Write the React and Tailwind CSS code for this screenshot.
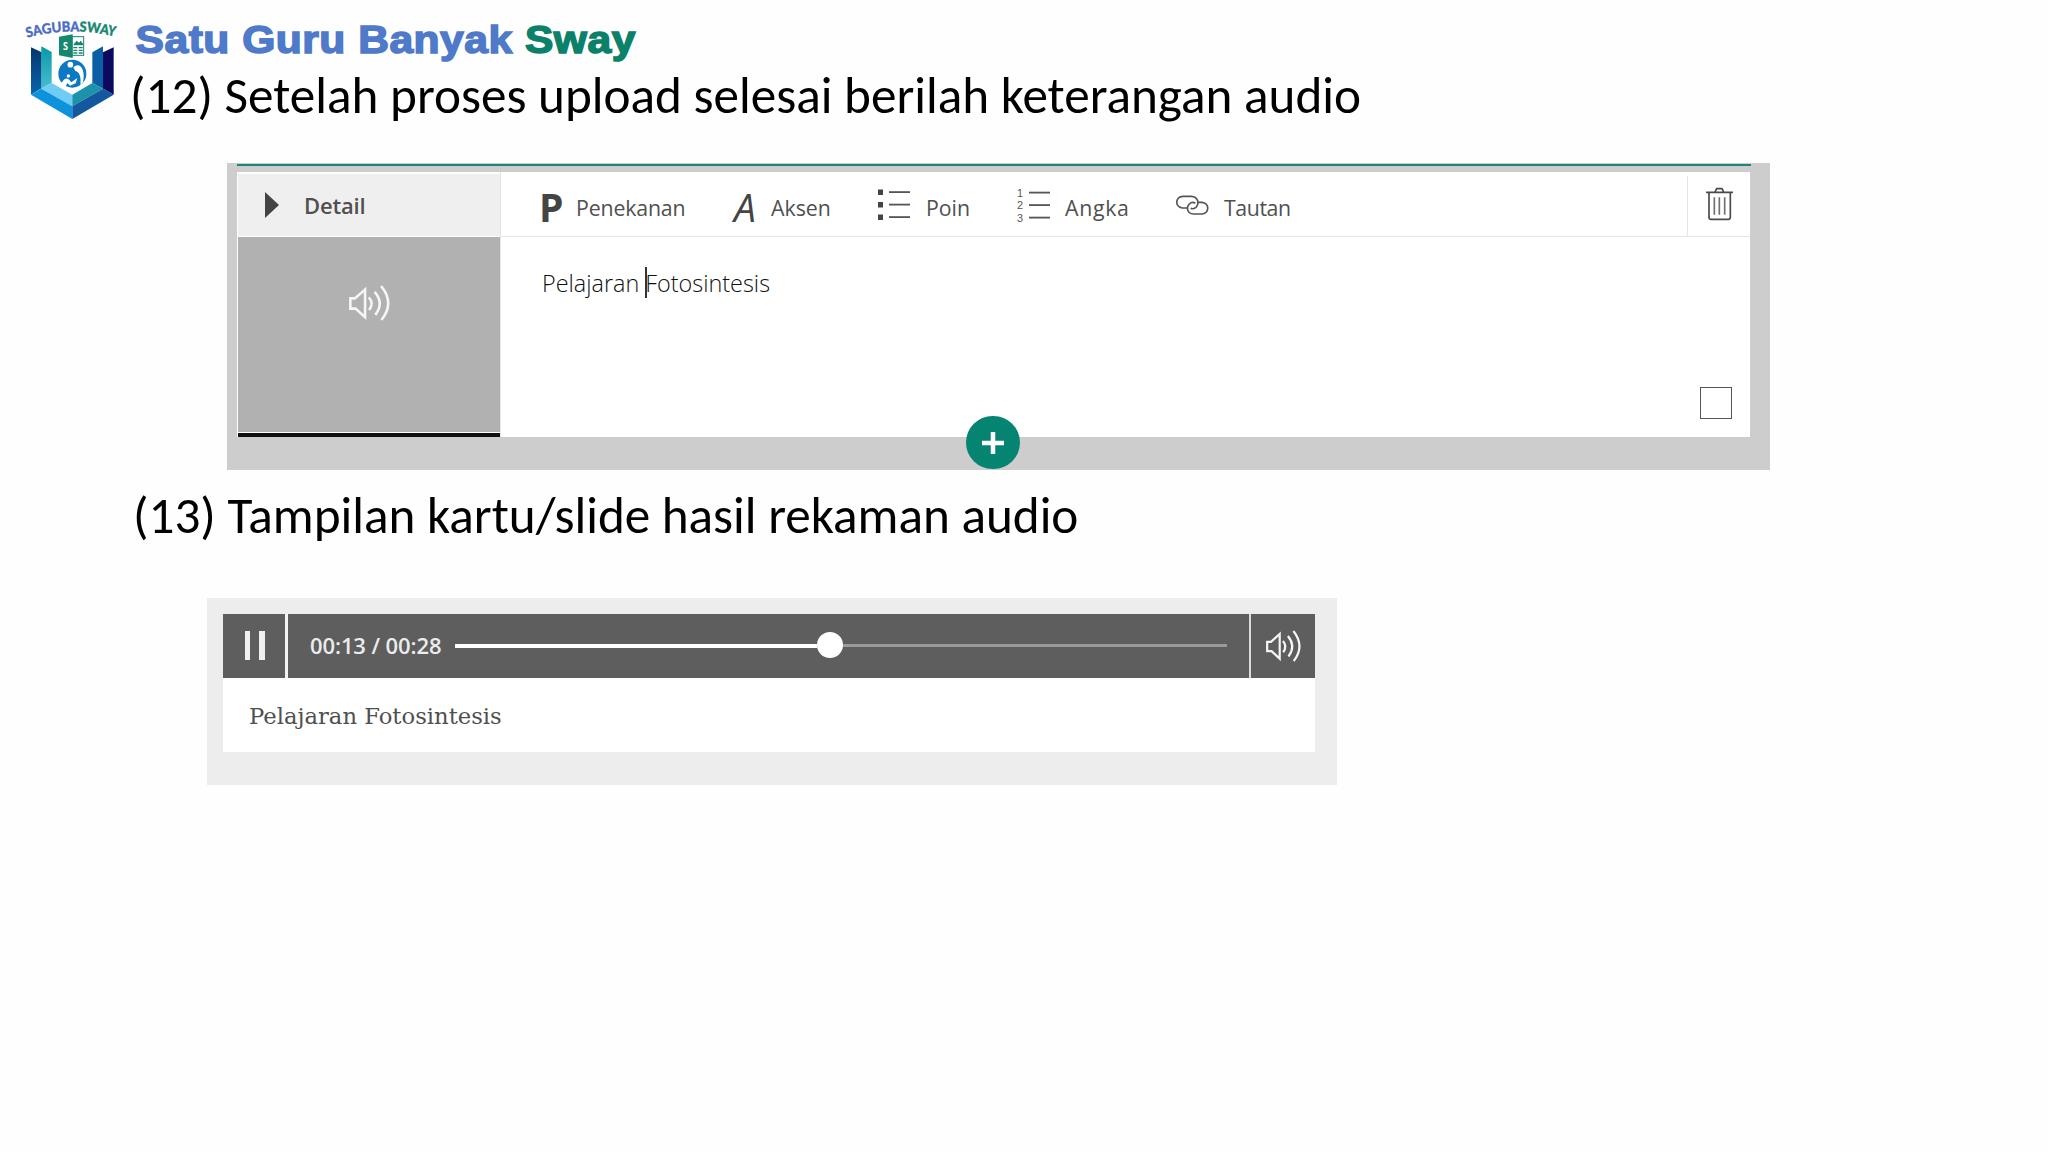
const toolbarItems = [
  { label: "Penekanan", icon: <BoldIcon />, spacing: "w-[191px]", gap: "w-[34px]", tracking: "tracking-[-0.15px]" },
  { label: "Aksen", icon: <AccentIcon />, spacing: "w-[145px]", gap: "w-[38px]", tracking: "tracking-normal" },
  { label: "Poin", icon: <BulletIcon />, spacing: "w-[139px]", gap: "w-[48px]", tracking: "tracking-normal" },
  { label: "Angka", icon: <NumberIcon />, spacing: "w-[159px]", gap: "w-[48px]", tracking: "tracking-[0.7px]" },
  { label: "Tautan", icon: <LinkIcon />, spacing: "w-[130px]", gap: "w-[48px]", tracking: "tracking-[-0.4px]" },
];

function BoldIcon() {
  return <span className="-ml-[3px] text-[39px] font-bold leading-none">P</span>;
}

function AccentIcon() {
  return <span className="ml-px text-[39px] font-medium italic leading-none">A</span>;
}

function BulletIcon() {
  return (
    <svg width="32" height="32" viewBox="0 0 32 32" className="-mt-1">
      {[3, 15.5, 28].map((y) => (
        <g key={y}>
          <rect x="0" y={y - 2.5} width="5" height="5.5" fill="#444" />
          <rect x="11" y={y - 0.8} width="21" height="1.8" fill="#555" />
        </g>
      ))}
    </svg>
  );
}

function NumberIcon() {
  return (
    <svg width="34" height="44" viewBox="0 -4 34 44" className="-mt-1">
      {[5.5, 18, 30.5].map((y, i) => (
        <g key={y}>
          <text x="0" y={y + 4.3} fontSize="10.8" fill="#555" className="font-['Liberation_Sans',sans-serif]">
            {i + 1}
          </text>
          <rect x="12" y={y - 0.8} width="21" height="1.8" fill="#555" />
        </g>
      ))}
    </svg>
  );
}

function LinkIcon() {
  return (
    <svg width="33" height="21" viewBox="0 0 99 63" fill="none" stroke="#555" strokeWidth="5" className="-mt-[2px]">
      <path d="M34 39H19C-4 36-3 5 21 4H46C66 5 70 24 61 36Q54 44 44 40" />
      <path d="M65 22H78C101 24 101 56 77 57H52C32 55 31 36 40 27Q48 19 58 25" />
    </svg>
  );
}

function SpeakerIcon({ className }) {
  return (
    <svg viewBox="0 0 120 105" fill="none" stroke="#f6f6f6" strokeWidth="7.5" preserveAspectRatio="none" className={className}>
      <path d="M4 39H17L47 13V94L19 69H4Z" />
      <path d="M58 36Q74 53 59 73" />
      <path d="M75 20Q104 53 77 87" />
      <path d="M94 3Q135 53 95 102" />
    </svg>
  );
}

function TrashIcon() {
  return (
    <svg width="27" height="34" viewBox="0 0 81 102" fill="none" stroke="#4a4a4a" strokeWidth="5">
      <path d="M0 16H81M27 15L32 5H48L53 15" />
      <path d="M9 18V91Q9 97 15 97H67Q73 97 73 91V18" />
      <path d="M25 31V83M40 31V83M56 31V83" stroke="#707070" />
    </svg>
  );
}

function Logo() {
  return (
    <svg width="120" height="130" viewBox="0 0 360 390">
      <defs>
        <path id="arc" d="M51 113Q187 77 319 111" />
        <linearGradient id="leftWing" x1="0" y1="0" x2="0" y2="1">
          <stop offset="0" stopColor="#04356f" />
          <stop offset="1" stopColor="#0866ae" />
        </linearGradient>
        <linearGradient id="teal" x1="0" y1="0" x2="0" y2="1">
          <stop offset="0" stopColor="#0799a5" />
          <stop offset="1" stopColor="#49bed2" />
        </linearGradient>
      </defs>
      <text
        fontSize="47"
        fontWeight="700"
        fill="#4a6cc4"
        stroke="#4a6cc4"
        strokeWidth="1"
        className="font-['Carlito','Lato',sans-serif]"
      >
        <textPath href="#arc" textLength="266" lengthAdjust="spacingAndGlyphs">
          SAGUBA<tspan fill="#16876f" stroke="#16876f">SWAY</tspan>
        </textPath>
      </text>
      {/* Open book */}
      <path d="M63 142L95 157V265L63 284Z" fill="url(#leftWing)" />
      <path d="M94 139L125 156V249L94 266Z" fill="url(#teal)" />
      <path d="M247 157L279 139V266L247 249Z" fill="#0b5fa5" />
      <path d="M279 157L311 142V284L279 266Z" fill="#0b0a5e" />
      <path d="M125 249L187 284V319L94 266Z" fill="#6fcdf5" />
      <path d="M94 266L187 319V357L63 284Z" fill="#0d93dc" />
      <path d="M247 249L187 284V319L279 266Z" fill="#1b93ab" />
      <path d="M279 266L187 319V357L311 284Z" fill="#13589f" />
      {/* Teacher and pupil */}
      <circle cx="187" cy="221" r="42" fill="#0b78c4" />
      <circle cx="181" cy="194" r="8.5" fill="#fff" />
      <path d="M190 202C208 183 228 208 219 247L211 256C214 232 209 216 196 213Z" fill="#fff" />
      <circle cx="175" cy="228" r="5" fill="#fff" />
      <path d="M144 238L153 250L161 240Q167 232 176 238L184 247L202 234L197 250L180 257L172 249L166 262Q150 256 144 238Z" fill="#fff" />
      {/* Sway tile */}
      <rect x="186" y="110" width="35" height="56" fill="#fff" stroke="#16876f" strokeWidth="3" />
      <path d="M191 133L200 122L207 128L212 122L219 131V136H191Z" fill="#16876f" />
      <path d="M190 143H202M206 143H218M190 151H202M206 151H218M190 159H202M206 159H218" stroke="#16876f" strokeWidth="4" />
      <path d="M147 110L188 103V174L147 166Z" fill="#16876f" />
      <text x="159" y="151" fontSize="33" fontWeight="700" fill="#fff" textLength="15" lengthAdjust="spacingAndGlyphs">
        S
      </text>
    </svg>
  );
}

function AudioCardEditor() {
  return (
    <div className="ml-[227px] mt-[25px] h-[307px] w-[1543px] bg-[#cdcdcd] pl-[10px] pt-px">
      <div className="h-[2px] w-[1514px] bg-[#1f8579]" />
      <div className="mt-[6px] flex h-[265px] w-[1513px] bg-white pl-px text-[#444]">
        {/* Left column */}
        <div className="w-[262px] pt-[2px]">
          <div className="flex h-[62px] items-center bg-[#efefef] pl-[27px]">
            <svg width="14" height="26" viewBox="0 0 14 26">
              <path d="M0 0L14 13L0 26Z" fill="#444" />
            </svg>
            <span className="ml-[25px] text-[22px] font-semibold tracking-[-0.2px] text-[#505050]">Detail</span>
          </div>
          <div className="mt-px flex h-[195px] justify-center bg-[#b1b1b1] pt-[48px]">
            <SpeakerIcon className="h-[36px] w-[41px]" />
          </div>
          <div className="mt-px h-[4px] bg-[#111]" />
        </div>

        {/* Right column */}
        <div className="flex flex-1 flex-col border-l border-[#e3e3e3]">
          <div className="flex h-[65px] border-b border-[#e6e6e6] pl-[41px]">
            {toolbarItems.map((item) => (
              <div key={item.label} className={`flex items-center pt-[5px] ${item.spacing}`}>
                <span className={`flex h-full items-center ${item.gap}`}>{item.icon}</span>
                <span className={`pt-[3px] text-[21.3px] text-[#505050] ${item.tracking}`}>{item.label}</span>
              </div>
            ))}
            <div className="ml-auto mt-1 flex w-[63px] justify-center border-l border-[#e6e6e6] pt-[11px]">
              <TrashIcon />
            </div>
          </div>
          <div className="relative flex-1 pl-[41px] pt-[28px]">
            <p className="whitespace-pre text-[23.4px] font-light leading-[36px] text-[#111]">Pelajaran Fotosintesis</p>
            <div className="absolute left-[144px] top-[30px] h-[31px] w-[2px] bg-[#333]" />
            <div className="absolute right-[18px] bottom-[18px] h-8 w-8 border-[1.5px] border-[#555]" />
          </div>
        </div>
      </div>
      <div className="relative left-[729px] -top-[21px] flex h-[53px] w-[54px] items-center justify-center rounded-full bg-[#058571]">
        <svg width="22" height="22" viewBox="0 0 22 22" stroke="#fff" strokeWidth="4.5">
          <path d="M11 0V22M0 11H22" />
        </svg>
      </div>
    </div>
  );
}

function AudioPlayer() {
  return (
    <div className="ml-[207px] h-[187px] w-[1130px] bg-[#ededed] pl-[16px] pt-[16px]">
      <div className="flex h-[64px] w-[1092px] bg-[#5e5e5e] pb-px">
        <div className="flex w-[62px] items-center justify-center gap-[9px]">
          <div className="ml-px h-[29px] w-[5px] bg-[#f0f0f0]" />
          <div className="h-[29px] w-[6px] bg-[#f0f0f0]" />
        </div>
        <div className="-mb-px w-[3px] bg-[#f4f4f4]" />
        <div className="flex flex-1 items-center pl-[22px]">
          <span className="w-[145px] text-[22px] font-semibold tracking-[-0.1px] text-[#ececec]">00:13 / 00:28</span>
          <div className="flex items-center">
            <div className="h-[4px] w-[362px] bg-white" />
            <div className="-mt-[2px] h-[26px] w-[26px] rounded-full bg-white" />
            <div className="h-[3px] w-[384px] bg-[#9a9a9a]" />
          </div>
        </div>
        <div className="-mb-px w-[2px] bg-[#dcdcdc]" />
        <div className="flex w-[64px] items-center pl-[15px]">
          <SpeakerIcon className="h-[32px] w-[35px]" />
        </div>
      </div>
      <div className="flex h-[74px] w-[1092px] items-center bg-white pl-[26px] pt-[2px]">
        <p className="font-['DejaVu_Serif',serif] text-[22.7px] text-[#505050]">Pelajaran Fotosintesis</p>
      </div>
    </div>
  );
}

export default function App() {
  return (
    <div className="h-[1152px] w-[2048px] overflow-hidden bg-[#fefefe] font-['Open_Sans',sans-serif]">
      <header className="flex h-[138px] pl-[10px]">
        <Logo />
        <div className="whitespace-nowrap">
          <h1 className="mt-[17px] h-[45px] origin-left scale-x-[1.12] pl-[5px] font-['Liberation_Sans',sans-serif] text-[38px] font-bold leading-[46px] tracking-[0.45px] text-[#4f79c9] [-webkit-text-stroke:1.5px_#4f79c9]">
            Satu Guru Banyak <span className="text-[#0b8169] [-webkit-text-stroke:1.5px_#0b8169]">Sway</span>
          </h1>
          <h2 className="font-['Carlito','Lato',sans-serif] text-[51.2px] leading-[68px] text-black">
            (12) Setelah proses upload selesai berilah keterangan audio
          </h2>
        </div>
      </header>
      <AudioCardEditor />
      <h2 className="ml-[133px] flex h-[128px] pt-[12px] font-['Carlito','Lato',sans-serif] text-[51.2px] leading-[68px] tracking-[-0.02px] text-black">
        (13) Tampilan kartu/slide hasil rekaman audio
      </h2>
      <AudioPlayer />
    </div>
  );
}
